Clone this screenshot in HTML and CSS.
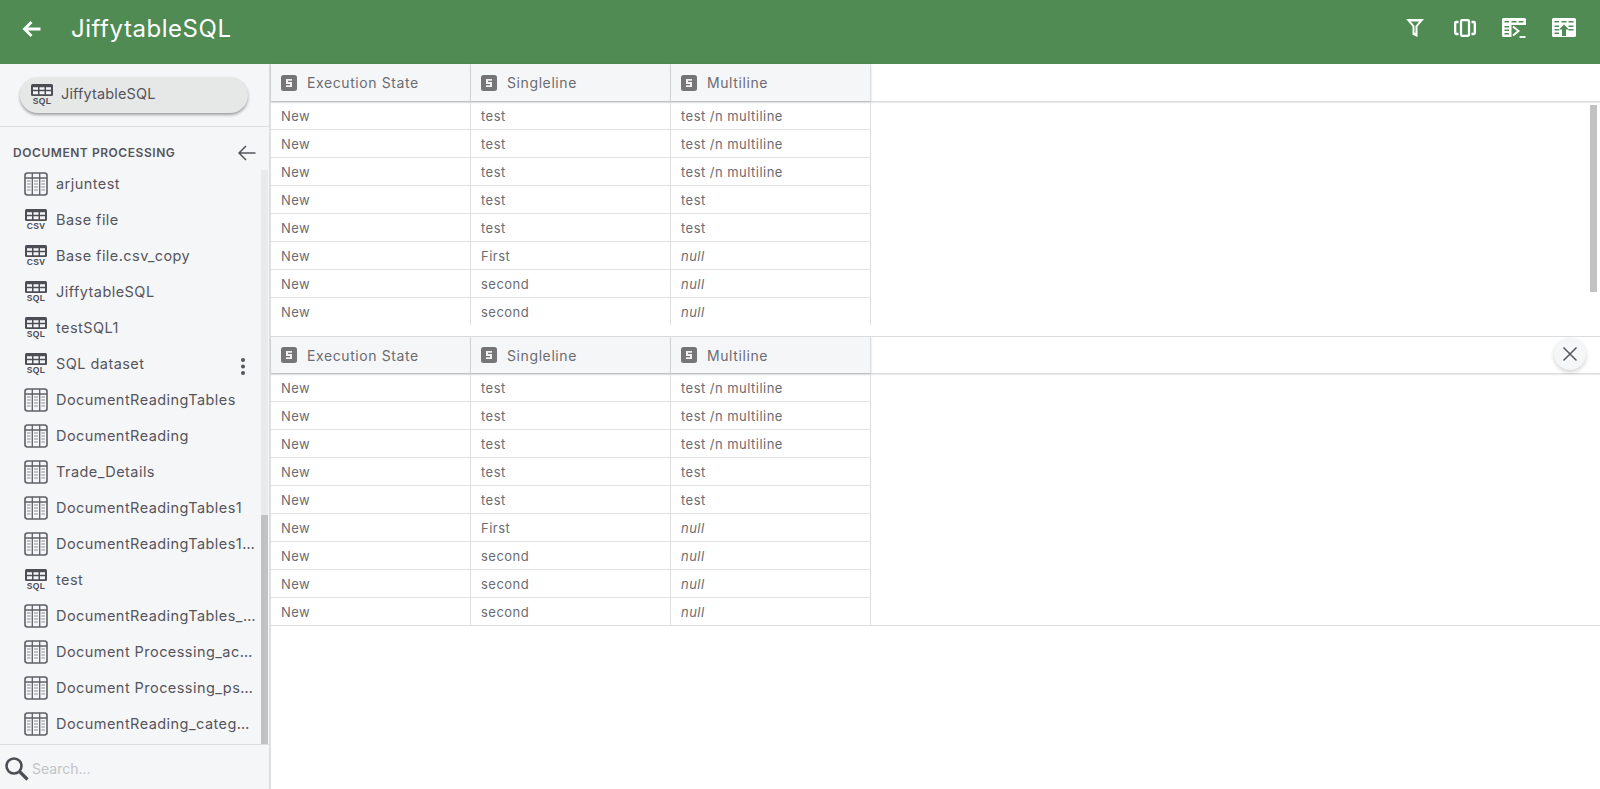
FILE: index.html
```html
<!DOCTYPE html>
<html lang="en">
<head>
<meta charset="utf-8">
<title>JiffytableSQL</title>
<link rel="stylesheet" href="styles.css">
</head>
<body>
<svg class="defs" width="0" height="0" aria-hidden="true">
  <symbol id="tbl" viewBox="0 0 24 24">
    <rect x="1" y="1" width="22" height="22" rx="2.500" fill="none" stroke="#5f5f66" stroke-width="1.600"/>
    <path d="M1 6h22M8.300 1v22M15.700 1v22" fill="none" stroke="#5f5f66" stroke-width="1.300"/>
    <path d="M3 9h3.600M3 12h3.600M3 15h3.600M3 18h3.600M10 9h4M10 12h4M10 15h4M10 18h4M17.400 9h3.600M17.400 12h3.600M17.400 15h3.600M17.400 18h3.600" fill="none" stroke="#8e8e96" stroke-width="1"/>
  </symbol>
  <symbol id="grid" viewBox="0 0 22 12">
    <rect width="22" height="12" rx="1.500" fill="#4d4d55"/>
    <path d="M2 3.300h5v2.500H2zM8.500 3.300h5v2.500h-5zM15 3.300h5v2.500h-5zM2 7.300h5v2.900H2zM8.500 7.300h5v2.900h-5zM15 7.300h5v2.900h-5z" fill="#f5f6f8"/>
  </symbol>
  <symbol id="s" viewBox="0 0 16 16">
    <rect width="16" height="16" rx="2.500" fill="#757578"/>
    <path d="M5 4h6v1.800H7v1.300h4V12H5v-1.800h4V8.900H5z" fill="#f1f1f1"/>
  </symbol>
</svg>

<header class="topbar">
  <svg class="back" viewBox="0 0 24 24" width="24" height="24"><path d="M20.500 12H5M11.500 5 4.500 12l7 7" fill="none" stroke="#fff" stroke-width="2.800"/></svg>
  <h1 class="title">JiffytableSQL</h1>
  <div class="tools">
    <svg class="filter" viewBox="0 0 18 18" width="18" height="18"><path d="M0 0h18l-6.500 7.500V18l-5-2.200V7.500zM4.800 2.600 8.500 7v6.500l1 .4V7l3.700-4.400z" fill="#fff" fill-rule="evenodd"/></svg>
    <svg viewBox="0 0 22 18" width="22" height="18"><g fill="none" stroke="#fff" stroke-width="2.300"><rect x="7" y="1.200" width="8" height="15.600" rx="1"/><path d="M4.500 3H2.200a1 1 0 0 0-1 1v10a1 1 0 0 0 1 1h2.300M17.500 3h2.300a1 1 0 0 1 1 1v10a1 1 0 0 1-1 1h-2.300"/></g></svg>
    <svg viewBox="0 0 24 20" width="24" height="20"><path d="M1.500 0h21A1.500 1.500 0 0 1 24 1.500V7H9.500v12h-8A1.500 1.500 0 0 1 0 17.500v-16A1.500 1.500 0 0 1 1.500 0zM2.500 3v1.500H7V3zm7 0v1.500h5V3zm7 0v1.500h5V3zM2.500 8v1.500H7V8zm0 3.500V13H7v-1.500zm0 3.500v1.500H7V15z" fill="#fff" fill-rule="evenodd"/><path d="m11 8.500 5.500 4.500-5.500 4.500" fill="none" stroke="#fff" stroke-width="2"/><path d="M17.500 19h6" stroke="#fff" stroke-width="1.800"/></svg>
    <svg viewBox="0 0 24 19" width="24" height="19"><path d="M1.500 0h21A1.500 1.500 0 0 1 24 1.500v16a1.500 1.500 0 0 1-1.500 1.500h-21A1.500 1.500 0 0 1 0 17.500v-16A1.500 1.500 0 0 1 1.500 0zM2.500 3v1.500H7V3zm7 0v1.500h5V3zm7 0v1.500h5V3zM2.500 7.500V9H7V7.500zm0 3.500v1.500H7V11zm0 3.500V16H7v-1.500zm14-7V9h5V7.500zm0 3.500v1.500h5V11z" fill="#fff" fill-rule="evenodd"/><path d="m12 6.500 5 5h-3V18h-4v-6.500H7z" fill="#4f8b53"/></svg>
  </div>
</header>

<div class="body">
  <aside class="side">
    <div class="pillbox">
      <div class="pill"><span class="ds"><svg><use href="#grid"/></svg><b>SQL</b></span><span class="label">JiffytableSQL</span></div>
    </div>
    <div class="sechead">
      <span>DOCUMENT PROCESSING</span>
      <svg viewBox="0 0 20 20" width="20" height="20"><path d="M18.500 10H2M9 3 2 10l7 7" fill="none" stroke="#55555c" stroke-width="1.500"/></svg>
    </div>
    <div class="listwrap">
      <ul class="list">
        <li><svg class="ico"><use href="#tbl"/></svg><span class="label">arjuntest</span></li>
        <li><span class="ds"><svg><use href="#grid"/></svg><b>CSV</b></span><span class="label">Base file</span></li>
        <li><span class="ds"><svg><use href="#grid"/></svg><b>CSV</b></span><span class="label">Base file.csv_copy</span></li>
        <li><span class="ds"><svg><use href="#grid"/></svg><b>SQL</b></span><span class="label">JiffytableSQL</span></li>
        <li><span class="ds"><svg><use href="#grid"/></svg><b>SQL</b></span><span class="label">testSQL1</span></li>
        <li><span class="ds"><svg><use href="#grid"/></svg><b>SQL</b></span><span class="label">SQL dataset</span><i class="more"></i></li>
        <li><svg class="ico"><use href="#tbl"/></svg><span class="label">DocumentReadingTables</span></li>
        <li><svg class="ico"><use href="#tbl"/></svg><span class="label">DocumentReading</span></li>
        <li><svg class="ico"><use href="#tbl"/></svg><span class="label">Trade_Details</span></li>
        <li><svg class="ico"><use href="#tbl"/></svg><span class="label">DocumentReadingTables1</span></li>
        <li><svg class="ico"><use href="#tbl"/></svg><span class="label">DocumentReadingTables1…</span></li>
        <li><span class="ds"><svg><use href="#grid"/></svg><b>SQL</b></span><span class="label">test</span></li>
        <li><svg class="ico"><use href="#tbl"/></svg><span class="label">DocumentReadingTables_…</span></li>
        <li><svg class="ico"><use href="#tbl"/></svg><span class="label">Document Processing_ac…</span></li>
        <li><svg class="ico"><use href="#tbl"/></svg><span class="label">Document Processing_ps…</span></li>
        <li><svg class="ico"><use href="#tbl"/></svg><span class="label">DocumentReading_categ…</span></li>
      </ul>
      <div class="sidescroll"><div class="sidethumb"></div></div>
    </div>
    <div class="search">
      <svg viewBox="0 0 26 26" width="26" height="26"><circle cx="10" cy="10" r="7.500" fill="none" stroke="#4d4d55" stroke-width="2.600"/><path d="m15.500 15.500 8 8" stroke="#4d4d55" stroke-width="3.200"/></svg>
      <span>Search...</span>
    </div>
  </aside>

  <main class="main">
    <section class="panel first">
      <div class="row head">
        <div class="cell"><svg class="s"><use href="#s"/></svg>Execution State</div>
        <div class="cell"><svg class="s"><use href="#s"/></svg>Singleline</div>
        <div class="cell"><svg class="s"><use href="#s"/></svg>Multiline</div>
      </div>
      <div class="row"><div class="cell">New</div><div class="cell">test</div><div class="cell">test /n multiline</div></div>
      <div class="row"><div class="cell">New</div><div class="cell">test</div><div class="cell">test /n multiline</div></div>
      <div class="row"><div class="cell">New</div><div class="cell">test</div><div class="cell">test /n multiline</div></div>
      <div class="row"><div class="cell">New</div><div class="cell">test</div><div class="cell">test</div></div>
      <div class="row"><div class="cell">New</div><div class="cell">test</div><div class="cell">test</div></div>
      <div class="row"><div class="cell">New</div><div class="cell">First</div><div class="cell nul">null</div></div>
      <div class="row"><div class="cell">New</div><div class="cell">second</div><div class="cell nul">null</div></div>
      <div class="row last"><div class="cell">New</div><div class="cell">second</div><div class="cell nul">null</div></div>
      <div class="mainthumb"></div>
    </section>
    <section class="panel second">
      <div class="row head">
        <div class="cell"><svg class="s"><use href="#s"/></svg>Execution State</div>
        <div class="cell"><svg class="s"><use href="#s"/></svg>Singleline</div>
        <div class="cell"><svg class="s"><use href="#s"/></svg>Multiline</div>
      </div>
      <div class="row"><div class="cell">New</div><div class="cell">test</div><div class="cell">test /n multiline</div></div>
      <div class="row"><div class="cell">New</div><div class="cell">test</div><div class="cell">test /n multiline</div></div>
      <div class="row"><div class="cell">New</div><div class="cell">test</div><div class="cell">test /n multiline</div></div>
      <div class="row"><div class="cell">New</div><div class="cell">test</div><div class="cell">test</div></div>
      <div class="row"><div class="cell">New</div><div class="cell">test</div><div class="cell">test</div></div>
      <div class="row"><div class="cell">New</div><div class="cell">First</div><div class="cell nul">null</div></div>
      <div class="row"><div class="cell">New</div><div class="cell">second</div><div class="cell nul">null</div></div>
      <div class="row"><div class="cell">New</div><div class="cell">second</div><div class="cell nul">null</div></div>
      <div class="row last"><div class="cell">New</div><div class="cell">second</div><div class="cell nul">null</div></div>
      <button class="close" type="button" aria-label="Close"><svg viewBox="0 0 16 16" width="16" height="16"><path d="m1.500 1.500 13 13M14.500 1.500l-13 13" stroke="#55555c" stroke-width="1.500" fill="none"/></svg></button>
    </section>
  </main>
</div>
</body>
</html>
```
FILE: styles.css
```css
* { box-sizing: border-box; }
html, body { margin: 0; height: 100%; overflow: hidden; }
body { font-family: Inter, "Open Sans", sans-serif; color: #55555c; background: #fff; display: flex; flex-direction: column; }
.defs { position: absolute; }

.topbar { height: 64px; flex: none; background: #4f8b53; display: flex; align-items: center; padding: 0 20px 7px; }
.back { flex: none; }
.title { margin: 0 0 0 27px; font-size: 24px; font-weight: 400; color: #fff; letter-spacing: .55px; }
.tools { margin-left: auto; display: flex; align-items: center; gap: 26px; padding: 0 4px 2px 0; }
.filter { margin-right: 4px; }

.body { flex: 1; display: flex; min-height: 0; }

.side { width: 271px; flex: none; background: #f5f6f8; border-right: 2px solid #dedfe1; display: flex; flex-direction: column; }
.pillbox { height: 63px; flex: none; padding: 13px 21px 0 20px; border-bottom: 1px solid #dcdddf; }
.pill { height: 36px; border-radius: 18px; background: #e6e7e7; box-shadow: 0 2px 3px rgba(0,0,0,.35); display: flex; align-items: center; padding-left: 10px; gap: 7px; font-size: 14.500px; letter-spacing: .15px; }
.pill .label { padding-bottom: 3px; }
.sechead { height: 39px; flex: none; display: flex; align-items: center; justify-content: space-between; padding: 12px 12px 0 13px; font-size: 12px; font-weight: 600; letter-spacing: .55px; }
.listwrap { flex: 1; min-height: 0; display: flex; overflow: hidden; }
.list { list-style: none; margin: 0; padding: 0 0 0 24px; flex: 1; min-width: 0; }
.list li { height: 36px; display: flex; align-items: center; gap: 8px; font-size: 14.500px; letter-spacing: .45px; white-space: nowrap; position: relative; }
.list .label { padding-bottom: 1px; }
.ico { width: 24px; height: 24px; flex: none; }
.ds { width: 24px; flex: none; display: flex; flex-direction: column; align-items: center; color: #4d4d55; }
.ds svg { width: 22px; height: 12px; }
.ds b { font: 700 8.500px/9px "Liberation Sans", sans-serif; letter-spacing: .3px; margin-top: 1px; }
.more { position: absolute; left: 217px; top: 12px; width: 4px; height: 4px; border-radius: 50%; background: #55555c; box-shadow: 0 6.500px 0 #55555c, 0 13px 0 #55555c; }
.sidescroll { width: 7px; flex: none; background: #e9eaeb; margin: 4px 1px 0 0; padding-top: 345px; }
.sidethumb { height: 100%; background: #c2c2c2; }
.search { height: 45px; flex: none; border-top: 1px solid #dcdddf; display: flex; align-items: center; gap: 2px; padding: 3px 0 0 4px; font-size: 14px; color: #c3c4c7; }

.main { flex: 1; min-width: 0; position: relative; }
.panel { position: relative; }
.panel.first { height: 272px; }
.panel.second { border-top: 1px solid #dcdddf; border-bottom: 1px solid #dcdddf; }
.row { display: flex; height: 28px; }
.row.last { height: 27px; }
.cell { width: 200px; flex: none; border-right: 1px solid #dcdddf; border-bottom: 1px solid #e2e3e5; padding: 0 0 0 10px; display: flex; align-items: center; font-size: 13px; letter-spacing: .47px; color: #6c6c71; }
.row.last .cell { border-bottom: 0; }
.nul { font-style: italic; }
.row.head { height: 38px; border-bottom: 1px solid #dcdddf; box-shadow: 0 1px 1px rgba(0,0,0,.08); }
.second .row.head { height: 37px; }
.row.head .cell { background: #f5f6f8; border-bottom: 0; font-size: 14px; letter-spacing: .6px; gap: 10px; padding: 0 0 0 10px; box-shadow: 0 1px 2px rgba(0,0,0,.16); }
.s { width: 16px; height: 16px; flex: none; }
.mainthumb { position: absolute; right: 3px; top: 41px; width: 7px; height: 187px; background: #c2c2c2; }
.close { position: absolute; right: 14px; top: 1px; width: 32px; height: 32px; border: 0; padding: 0; border-radius: 50%; background: #f5f6f8; box-shadow: 0 2px 4px rgba(0,0,0,.18); display: flex; align-items: center; justify-content: center; }
```
